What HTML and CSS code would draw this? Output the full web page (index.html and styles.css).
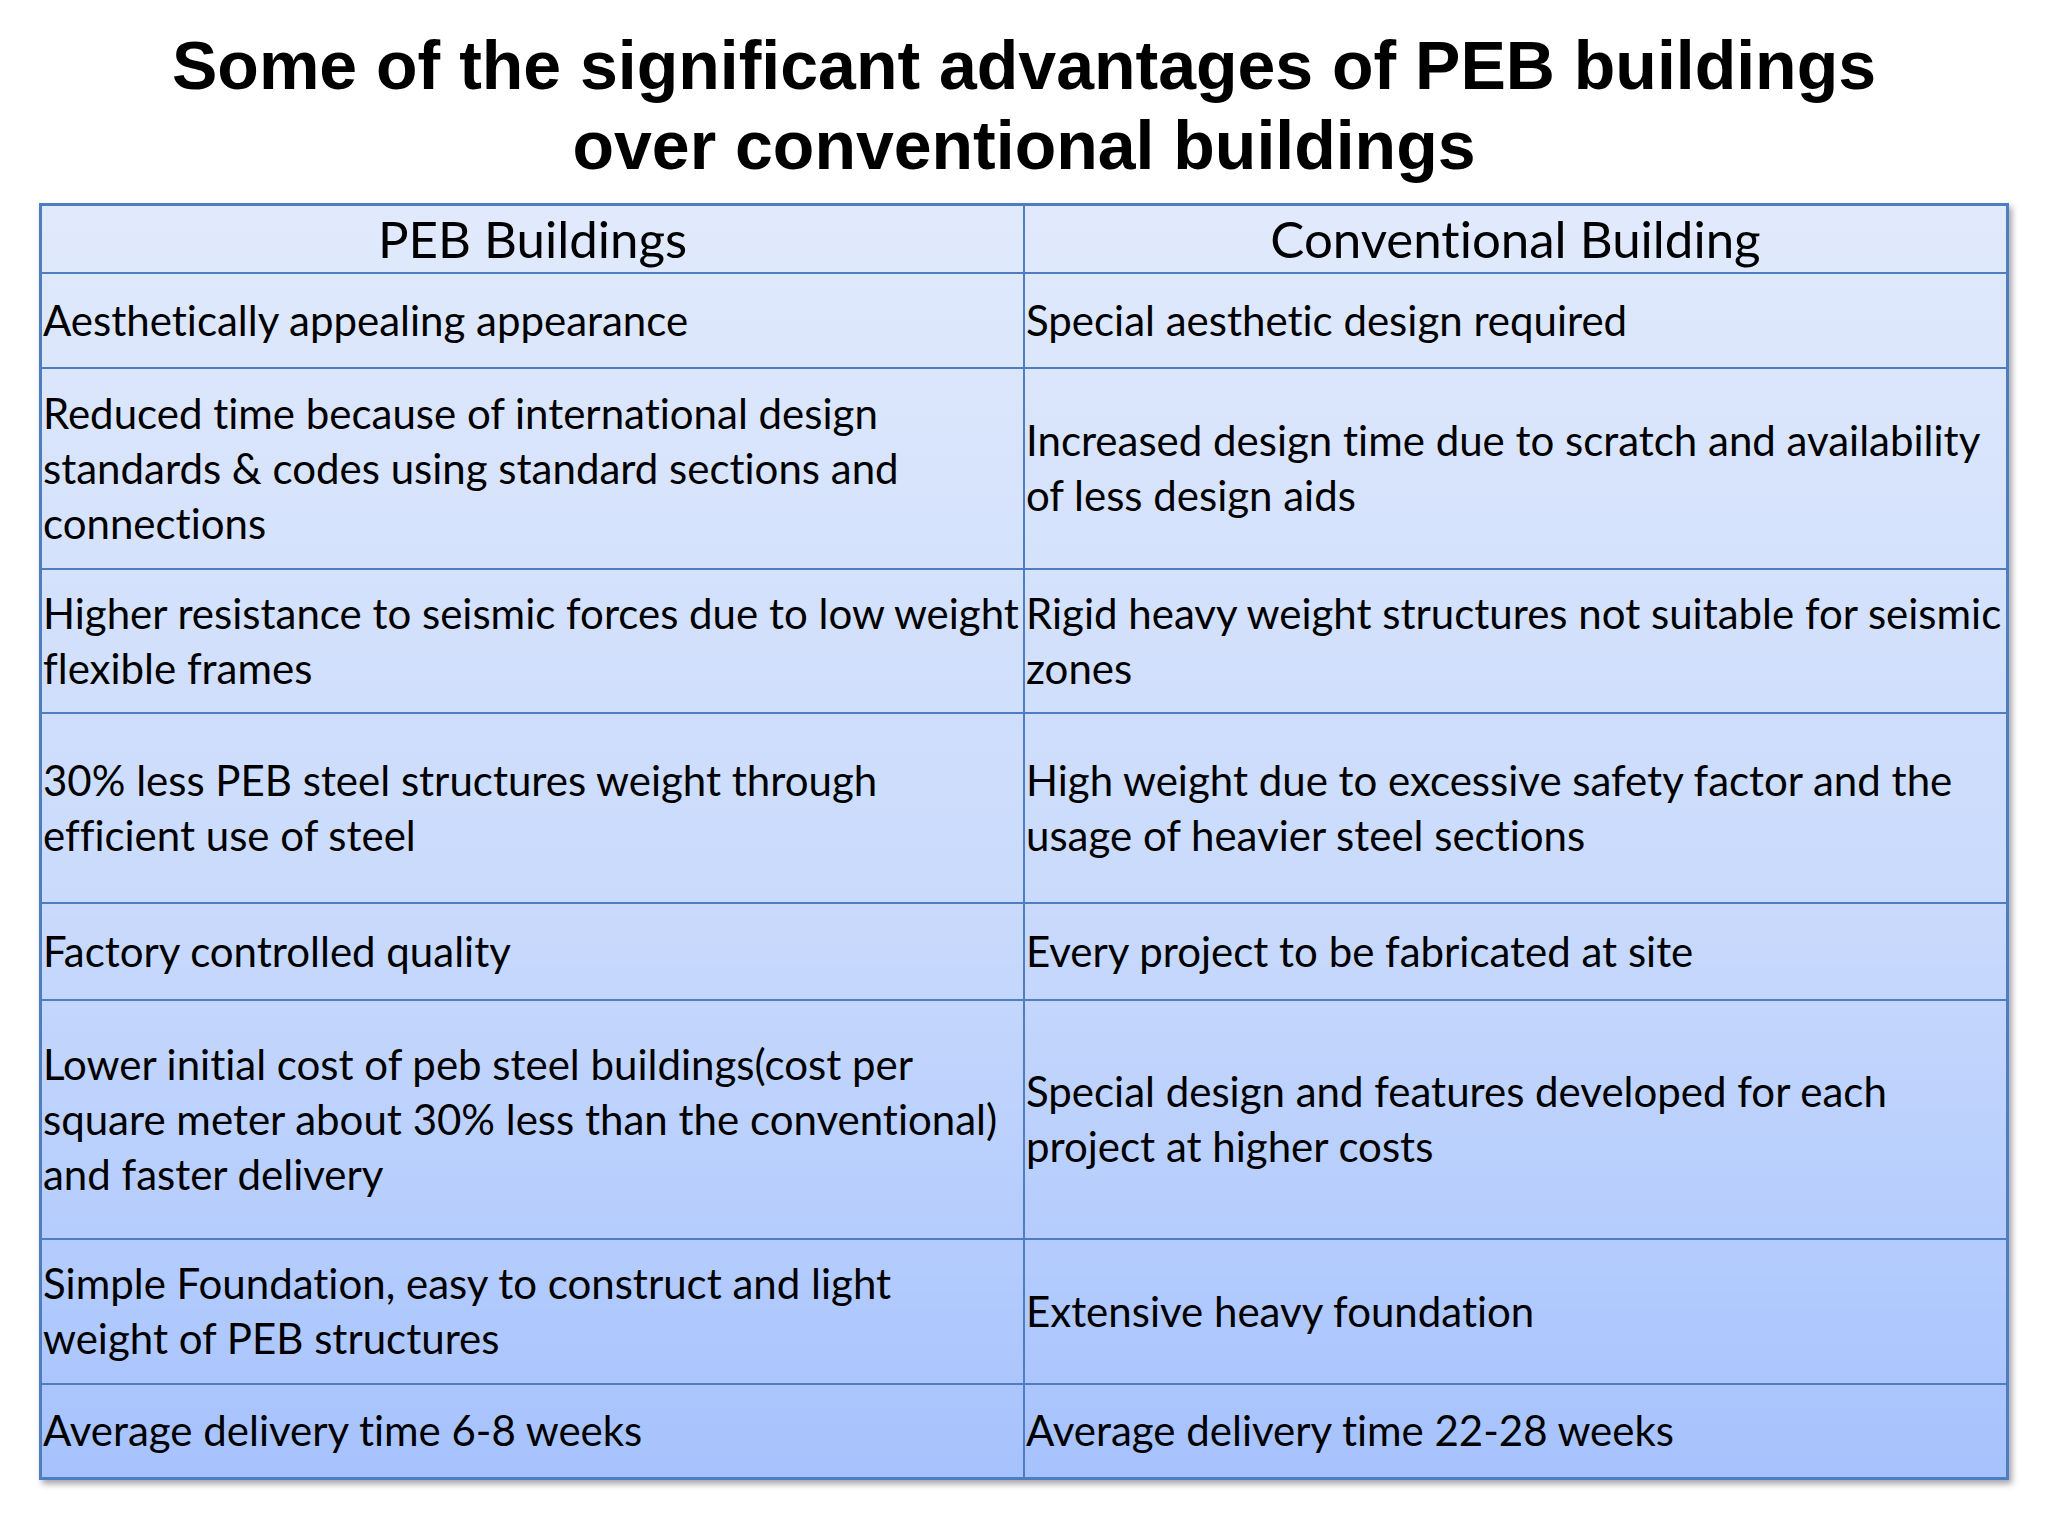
FILE: index.html
```html
<!DOCTYPE html>
<html lang="en">
<head>
<meta charset="utf-8">
<title>Advantages of PEB buildings</title>
<link rel="stylesheet" href="styles.css">
</head>
<body>
<h1 class="title">Some of the significant advantages of PEB buildings<br>over conventional buildings</h1>
<table class="compare">
  <colgroup><col class="col"><col class="col"></colgroup>
  <thead>
    <tr class="r-head"><th>PEB Buildings</th><th>Conventional Building</th></tr>
  </thead>
  <tbody>
    <tr class="r1"><td>Aesthetically appealing appearance</td><td>Special aesthetic design required</td></tr>
    <tr class="r2"><td>Reduced time because of international design<br>standards &amp; codes using standard sections and<br>connections</td><td>Increased design time due to scratch and availability<br>of less design aids</td></tr>
    <tr class="r3"><td>Higher resistance to seismic forces due to low weight<br>flexible frames</td><td>Rigid heavy weight structures not suitable for seismic<br>zones</td></tr>
    <tr class="r4"><td>30% less PEB steel structures weight through<br>efficient use of steel</td><td>High weight due to excessive safety factor and the<br>usage of heavier steel sections</td></tr>
    <tr class="r5"><td>Factory controlled quality</td><td>Every project to be fabricated at site</td></tr>
    <tr class="r6"><td>Lower initial cost of peb steel buildings(cost per<br>square meter about 30% less than the conventional)<br>and faster delivery</td><td>Special design and features developed for each<br>project at higher costs</td></tr>
    <tr class="r7"><td>Simple Foundation, easy to construct and light<br>weight of PEB structures</td><td>Extensive heavy foundation</td></tr>
    <tr class="r8"><td>Average delivery time 6-8 weeks</td><td>Average delivery time 22-28 weeks</td></tr>
  </tbody>
</table>
</body>
</html>
```
FILE: styles.css
```css
html, body {
  margin: 0;
  padding: 0;
  background: #ffffff;
}
body {
  width: 2048px;
  height: 1536px;
  overflow: hidden;
}
.title {
  margin: 25px 0 0 0;
  font-family: "Liberation Sans", Arial, sans-serif;
  font-weight: 700;
  font-size: 68px;
  line-height: 80px;
  text-align: center;
  color: #000;
}
.compare {
  margin: 18px 0 0 39px;
  width: 1970px;
  table-layout: fixed;
  border-collapse: collapse;
  border: 3px solid #4e7ec1;
  background: linear-gradient(to bottom, #e1eafc 0%, #c9dafc 55%, #a6c2fd 100%);
  box-shadow: 3px 4px 6px rgba(60, 60, 70, 0.45);
  font-family: Lato, "Open Sans", sans-serif;
  font-variant-ligatures: none;
  color: #000;
}
.col { width: 50%; }
.compare th,
.compare td {
  border: 2px solid #4e7ec1;
  padding: 0 0 0 1px;
  vertical-align: middle;
  white-space: nowrap;
  text-align: left;
  font-size: 42px;
  line-height: 55px;
  font-weight: 400;
}
.compare th {
  text-align: center;
  font-size: 51px;
  line-height: 60px;
  padding: 0;
}
.r-head { height: 68px; }
.r1 { height: 95px; }
.r2 { height: 201px; }
.r3 { height: 144px; }
.r4 { height: 190px; }
.r5 { height: 97px; }
.r6 { height: 239px; }
.r7 { height: 145px; }
.r8 { height: 95px; }
```
